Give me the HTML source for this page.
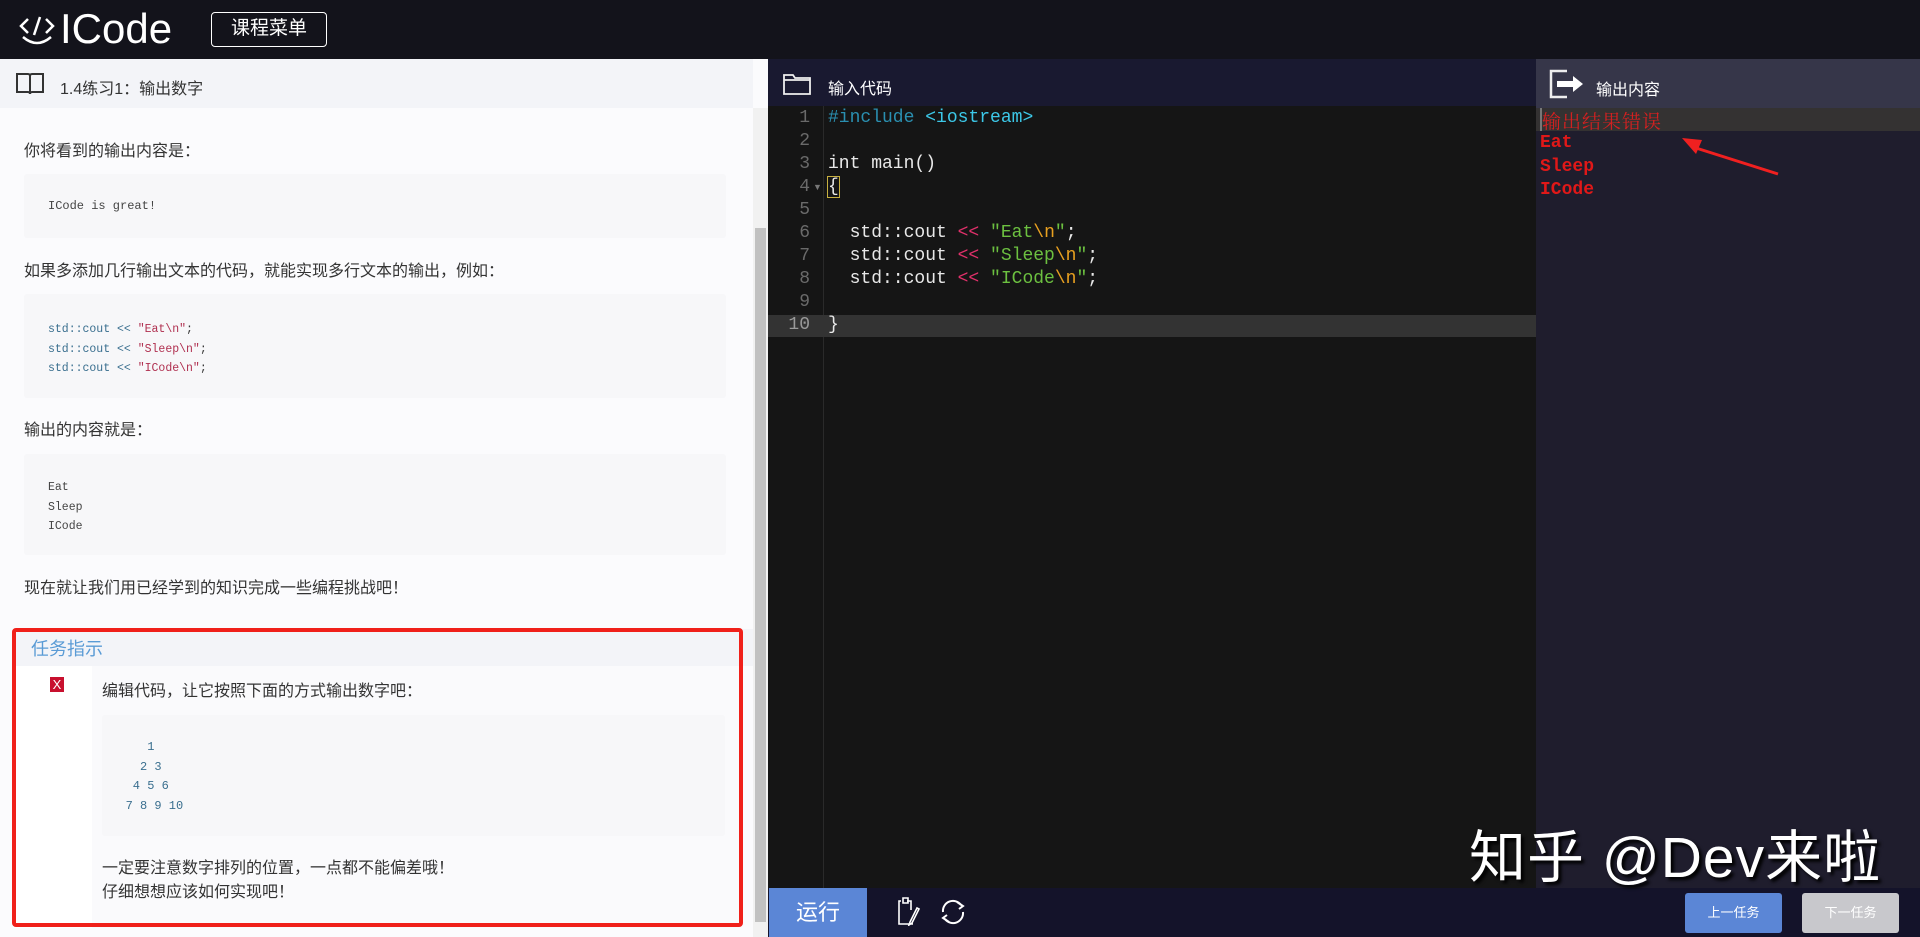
<!DOCTYPE html>
<html><head><meta charset="utf-8"><style>
*{margin:0;padding:0;box-sizing:border-box}
body{width:1920px;height:937px;overflow:hidden;background:#fff;font-family:"Liberation Sans","Noto Sans CJK SC",sans-serif;position:relative}
.a{position:absolute}
.mono{font-family:"Liberation Mono","DejaVu Sans Mono",monospace}
.cb{position:absolute;background:#f7f7f9;border-radius:3px}
.t{position:absolute;font-size:16px;color:#333;white-space:nowrap}
.cl{position:absolute;font-size:18px;white-space:pre;color:#e8e8e8;left:828px}
.ln{position:absolute;font-size:18px;color:#6a6a6a;width:40px;text-align:right;left:770px}
</style></head><body>
<!-- header -->
<div class="a" style="left:0;top:0;width:1920px;height:59px;background:#13131b"></div>
<svg class="a" style="left:18px;top:13px" width="40" height="34" viewBox="0 0 40 34"><path d="M10 6 L3 13 L10 20 M22 4 L16 22 M28 6 L35 13 L28 20" stroke="#fff" stroke-width="2.5" fill="none"/><path d="M5 24 Q19 36 33 24" stroke="#fff" stroke-width="2.5" fill="none"/></svg>
<div class="a" style="left:60px;top:5px;font-size:42px;color:#fff;font-weight:300">ICode</div>
<div class="a" style="left:211px;top:12px;width:116px;height:35px;border:1.5px solid #fff;border-radius:4px;color:#fff;font-size:19px;text-align:center;line-height:32px">课程菜单</div>

<!-- left panel -->
<div class="a" style="left:0;top:59px;width:768px;height:878px;background:#fbfbfd"></div>
<div class="a" style="left:0;top:59px;width:753px;height:49px;background:#f3f4f8"></div>
<svg class="a" style="left:15px;top:72px" width="30" height="24" viewBox="0 0 30 24"><path d="M2 2 H13 Q15 2 15 4 V22 Q15 20 13 20 H2 Z M28 2 H17 Q15 2 15 4 V22 Q15 20 17 20 H28 Z" stroke="#333" stroke-width="2" fill="none"/></svg>
<div class="t" style="left:60px;top:75px;font-size:16px">1.4练习1：输出数字</div>
<div class="t" style="left:24px;top:137px">你将看到的输出内容是：</div>
<div class="cb" style="left:24px;top:174px;width:702px;height:64px"></div>
<div class="t mono" style="left:48px;top:199px;font-size:12px;color:#444">ICode is great!</div>
<div class="t" style="left:24px;top:257px">如果多添加几行输出文本的代码，就能实现多行文本的输出，例如：</div>
<div class="cb" style="left:24px;top:294px;width:702px;height:104px"></div>
<div class="t mono" style="left:48px;top:320px;font-size:11.5px;line-height:19.5px;color:#3a6f8f">std::cout &lt;&lt; <span style="color:#b03050">"Eat\n"</span><span style="color:#333">;</span><br>std::cout &lt;&lt; <span style="color:#b03050">"Sleep\n"</span><span style="color:#333">;</span><br>std::cout &lt;&lt; <span style="color:#b03050">"ICode\n"</span><span style="color:#333">;</span></div>
<div class="t" style="left:24px;top:416px">输出的内容就是：</div>
<div class="cb" style="left:24px;top:454px;width:702px;height:101px"></div>
<div class="t mono" style="left:48px;top:478px;font-size:11.5px;line-height:19.5px;color:#444">Eat<br>Sleep<br>ICode</div>
<div class="t" style="left:24px;top:574px">现在就让我们用已经学到的知识完成一些编程挑战吧！</div>
<!-- scrollbar -->
<div class="a" style="left:753px;top:108px;width:15px;height:829px;background:#f1f1f1"></div>
<div class="a" style="left:755px;top:228px;width:11px;height:694px;background:#c1c1c1"></div>
<!-- task -->
<div class="a" style="left:13px;top:629px;width:740px;height:37px;background:#f3f4f8"></div>
<div class="a" style="left:13px;top:666px;width:79px;height:262px;background:#fff"></div>
<div class="a" style="left:92px;top:666px;width:650px;height:262px;background:#fafafc"></div>
<div class="t" style="left:31px;top:635px;font-size:18px;color:#5a9bd5">任务指示</div>
<div class="a" style="left:50px;top:677px;width:14px;height:15px;background:#c8102e;color:#fff;font-size:13px;line-height:15px;text-align:center">X</div>
<div class="t" style="left:102px;top:677px">编辑代码，让它按照下面的方式输出数字吧：</div>
<div class="cb" style="left:102px;top:715px;width:623px;height:121px"></div>
<div class="t mono" style="left:104px;top:738px;font-size:12px;line-height:19.5px;color:#3a6f8f;white-space:pre">      1
     2 3
    4 5 6
   7 8 9 10</div>
<div class="t" style="left:102px;top:854px">一定要注意数字排列的位置，一点都不能偏差哦！</div>
<div class="t" style="left:102px;top:878px">仔细想想应该如何实现吧！</div>
<div class="a" style="left:12px;top:628px;width:731px;height:299px;border:4px solid #f0201a;border-radius:4px"></div>

<!-- editor -->
<div class="a" style="left:768px;top:59px;width:768px;height:47px;background:#191930"></div>
<svg class="a" style="left:782px;top:72px" width="30" height="24" viewBox="0 0 30 24"><path d="M2 3 H11 L13 6 H28 V22 H2 Z M2 8 H28" stroke="#eee" stroke-width="1.8" fill="none"/></svg>
<div class="a" style="left:828px;top:75px;font-size:16px;color:#fff">输入代码</div>
<div class="a" style="left:768px;top:106px;width:768px;height:782px;background:#151515"></div>
<div class="a" style="left:823px;top:106px;width:1px;height:782px;background:#2a2a2a"></div>
<div class="a" style="left:768px;top:315px;width:768px;height:22px;background:#333"></div>
<div class="ln mono" style="top:108px">1</div>
<div class="ln mono" style="top:131px">2</div>
<div class="ln mono" style="top:154px">3</div>
<div class="ln mono" style="top:177px">4</div>
<div class="ln mono" style="top:200px">5</div>
<div class="ln mono" style="top:223px">6</div>
<div class="ln mono" style="top:246px">7</div>
<div class="ln mono" style="top:269px">8</div>
<div class="ln mono" style="top:292px">9</div>
<div class="ln mono" style="top:315px;color:#999">10</div>
<div class="a" style="left:813px;top:182px;font-size:9px;color:#777">▼</div>
<div class="cl mono" style="top:108px"><span style="color:#2a8fb0">#include</span> <span style="color:#3cc8e8">&lt;iostream&gt;</span></div>
<div class="cl mono" style="top:154px">int main()</div>
<div class="cl mono" style="top:177px"><span style="outline:1px solid #c8b040">{</span></div>
<div class="cl mono" style="top:223px">  std::cout <span style="color:#e0306a">&lt;&lt;</span> <span style="color:#6cc040">"Eat<span style="color:#e8a020">\n</span>"</span>;</div>
<div class="cl mono" style="top:246px">  std::cout <span style="color:#e0306a">&lt;&lt;</span> <span style="color:#6cc040">"Sleep<span style="color:#e8a020">\n</span>"</span>;</div>
<div class="cl mono" style="top:269px">  std::cout <span style="color:#e0306a">&lt;&lt;</span> <span style="color:#6cc040">"ICode<span style="color:#e8a020">\n</span>"</span>;</div>
<div class="cl mono" style="top:315px">}</div>

<!-- output -->
<div class="a" style="left:1536px;top:59px;width:384px;height:49px;background:#363649"></div>
<svg class="a" style="left:1547px;top:68px" width="40" height="32" viewBox="0 0 40 32"><path d="M20 3 H4 V29 H20" stroke="#eee" stroke-width="2.5" fill="none"/><path d="M10 13 H26 V8 L36 16 L26 24 V19 H10 Z" fill="#fff"/></svg>
<div class="a" style="left:1596px;top:76px;font-size:16px;color:#fff">输出内容</div>
<div class="a" style="left:1536px;top:108px;width:384px;height:780px;background:#1f1d2d"></div>
<div class="a" style="left:1536px;top:108px;width:384px;height:23px;background:#343232"></div>
<div class="a" style="left:1540px;top:108px;width:2px;height:23px;background:#777"></div>
<div class="a" style="left:1542px;top:107px;font-size:19px;color:#d42020;font-family:'Noto Serif CJK SC',serif;letter-spacing:1px">输出结果错误</div>
<div class="a mono" style="left:1540px;top:132px;font-size:18px;line-height:23.5px;color:#e01818;font-weight:bold">Eat<br>Sleep<br>ICode</div>
<svg class="a" style="left:1670px;top:130px" width="120" height="50"><path d="M108 44 L26 18" stroke="#f02020" stroke-width="3"/><path d="M12 8 L32 10 L26 24 Z" fill="#f02020"/></svg>

<!-- bottom bar -->
<div class="a" style="left:768px;top:888px;width:1152px;height:49px;background:#14132a"></div>
<div class="a" style="left:769px;top:888px;width:98px;height:49px;background:#5b86d6;color:#fff;font-size:22px;text-align:center;line-height:49px">运行</div>
<svg class="a" style="left:895px;top:896px" width="28" height="30" viewBox="0 0 28 30"><path d="M6 5 H4 V28 H18 M12 5 H16 V14 M8 2 H13 V7 H8 Z M22 12 L15 26 L14 29 L17 27 L24 13 Z" stroke="#fff" stroke-width="1.6" fill="none"/></svg>
<svg class="a" style="left:938px;top:898px" width="30" height="28" viewBox="0 0 30 28"><path d="M5 14 A10 10 0 0 1 23 7 M25 14 A10 10 0 0 1 7 21" stroke="#fff" stroke-width="2" fill="none"/><path d="M19 4 L25 8 L21 11 M11 24 L5 20 L9 17" stroke="#fff" stroke-width="2" fill="none"/></svg>
<div class="a" style="left:1469px;top:812px;font-size:57px;color:#fff;text-shadow:3px 3px 3px #000;white-space:nowrap;letter-spacing:1px">知乎 @Dev来啦</div>
<div class="a" style="left:1685px;top:893px;width:97px;height:40px;background:#5b86d6;border-radius:3px;color:#fff;font-size:13px;text-align:center;line-height:40px">上一任务</div>
<div class="a" style="left:1802px;top:893px;width:97px;height:40px;background:#c8c8cc;border-radius:3px;color:#fff;font-size:13px;text-align:center;line-height:40px">下一任务</div>
</body></html>
